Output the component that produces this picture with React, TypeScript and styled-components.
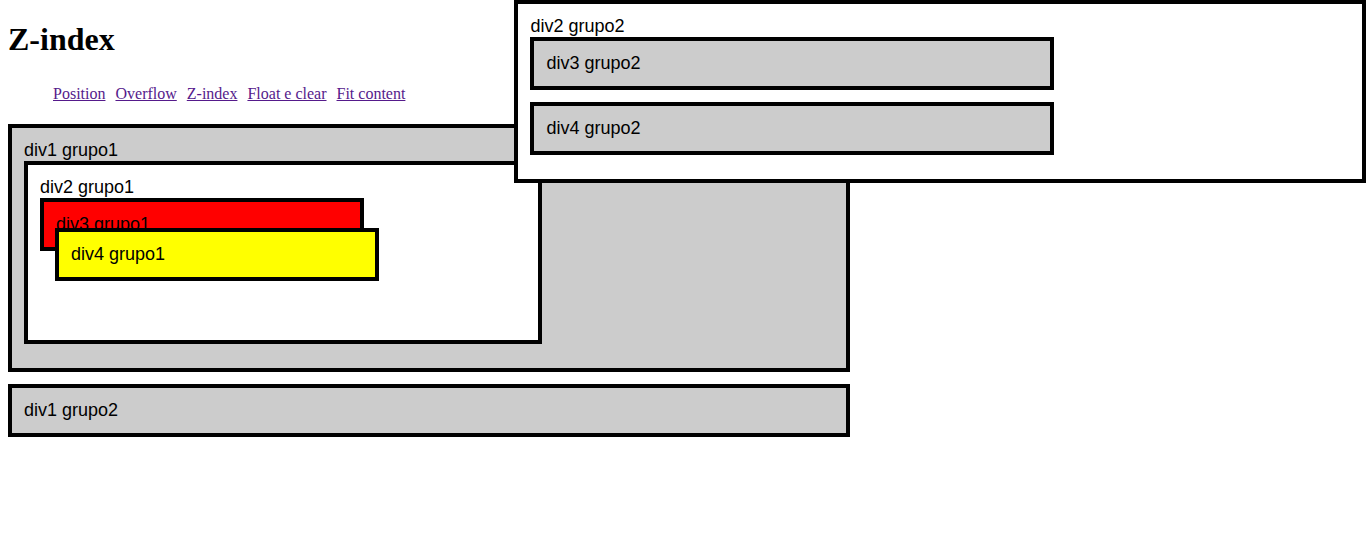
import styled, { createGlobalStyle } from 'styled-components';

const GlobalStyle = createGlobalStyle`
  body {
    margin: 8px;
    font-family: 'Liberation Serif', 'Times New Roman', serif;
    font-size: 16px;
    color: #000;
    background: #fff;
  }
`;

const links = ['Position', 'Overflow', 'Z-index', 'Float e clear', 'Fit content'];

export default function App() {
  return (
    <>
      <GlobalStyle />
      <Title>Z-index</Title>
      <Nav>
        {links.map((label) => (
          <NavItem key={label}>
            <NavLink href="#">{label}</NavLink>
          </NavItem>
        ))}
      </Nav>

      <Box $bg="#ccc">
        div1 grupo1
        <Box $bg="#fff">
          div2 grupo1
          <Box $bg="#f00">div3 grupo1</Box>
          <ShiftedBox $bg="#ff0">div4 grupo1</ShiftedBox>
        </Box>
      </Box>

      <Box $bg="#ccc">
        div1 grupo2
        <FloatingBox $bg="#fff">
          div2 grupo2
          <Box $bg="#ccc">div3 grupo2</Box>
          <Box $bg="#ccc">div4 grupo2</Box>
        </FloatingBox>
      </Box>
    </>
  );
}

const Title = styled.h1`
  font-size: 32px;
  font-weight: bold;
  margin: 13.44px 0 21.44px;
`;

const Nav = styled.ul`
  display: flex;
  list-style: none;
  margin: 16px 0;
  padding-left: 40px;
`;

const NavItem = styled.li`
  padding: 5px;
`;

const NavLink = styled.a`
  color: #551a8b;
  text-decoration: underline;
`;

const Box = styled.div<{ $bg: string }>`
  width: 60%;
  padding: 12px;
  margin-bottom: 12px;
  border: 4px solid #000;
  background: ${(props) => props.$bg};
  font-family: 'Liberation Sans', Arial, sans-serif;
  font-size: 18px;
`;

const ShiftedBox = styled(Box)`
  position: relative;
  top: -35px;
  left: 15px;
`;

const FloatingBox = styled(Box)`
  position: absolute;
  top: 0;
  right: 0;
  margin: 0;
  z-index: 10;
`;
